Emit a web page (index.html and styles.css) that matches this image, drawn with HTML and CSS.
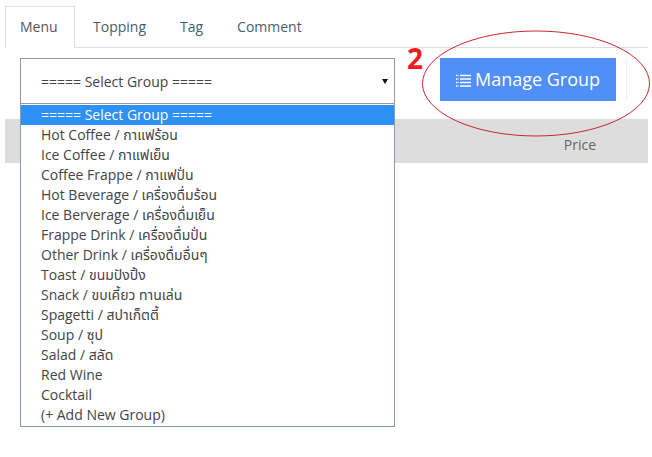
FILE: index.html
```html
<!DOCTYPE html>
<html lang="en">

<head>
    <meta charset="UTF-8" />
    <title>Menu</title>
    <link rel="stylesheet" href="styles.css">
</head>

<body>
    <div class="w">
        <!-- tabs -->
        <ul class="tabs">
            <li class="active">Menu</li>
            <li>Topping</li>
            <li>Tag</li>
            <li>Comment</li>
        </ul>

        <!-- select + button -->
        <div class="controls">
            <div class="select">
                <span>===== Select Group =====</span>
                <i class="arrow"></i>
                <ul class="options">
                    <li class="selected">===== Select Group =====</li>
                    <li>Hot Coffee / กาแฟร้อน</li>
                    <li>Ice Coffee / กาแฟเย็น</li>
                    <li>Coffee Frappe / กาแฟปั่น</li>
                    <li>Hot Beverage / เครื่องดื่มร้อน</li>
                    <li>Ice Berverage / เครื่องดื่มเย็น</li>
                    <li>Frappe Drink / เครื่องดื่มปั่น</li>
                    <li>Other Drink / เครื่องดื่มอื่นๆ</li>
                    <li>Toast / ขนมปังปิ้ง</li>
                    <li>Snack / ขบเคี้ยว ทานเล่น</li>
                    <li>Spagetti / สปาเก็ตตี้</li>
                    <li>Soup / ซุป</li>
                    <li>Salad / สลัด</li>
                    <li>Red Wine</li>
                    <li>Cocktail</li>
                    <li>(+ Add New Group)</li>
                </ul>
            </div>
            <b class="step">2</b>
            <button class="manage">
                <svg width="15" height="14" viewBox="0 0 15 14">
                    <path d="M4 2.5h11M4 6h11M4 9.5h11M4 13h11" stroke="#fff" stroke-width="1.6" />
                    <path d="M0 2.5h2.5M0 6h2.5M0 9.5h2.5M0 13h2.5" stroke="#fff" stroke-width="1.6" stroke-dasharray="1 .5" />
                </svg>
                <span class="manage-text">Manage Group</span>
            </button>
            <div class="divider"></div>
        </div>

        <!-- table head -->
        <div class="thead">
            <span>Price</span>
        </div>

        <!-- red circle round the button -->
        <svg class="circle" width="240" height="120" viewBox="0 0 240 120">
            <ellipse cx="120" cy="60.5" rx="113.5" ry="52.5" fill="none" stroke="#c9252f" stroke-width="1" />
        </svg>
    </div>
</body>

</html>
```

FILE: styles.css
```css
* {
    margin: 0;
    padding: 0;
    box-sizing: border-box;
}

ul {
    list-style: none;
}

body {
    font: 14px/20px "Open Sans", "Noto Sans", "Noto Sans Thai", "DejaVu Sans", sans-serif;
    color: #555;
    background: #fff;
}

.w {
    position: relative;
    width: 652px;
    height: 457px;
    padding: 6px 4px 0 5px;
    overflow: hidden;
}

.tabs {
    display: flex;
    height: 42px;
    border-bottom: 1px solid #ddd;
}

.tabs li {
    padding: 11px 17px 0;
    color: #3f5f6f;
}

.tabs li.active {
    width: 70px;
    height: 42px;
    margin-right: 1px;
    color: #555;
    background: #fff;
    border: 1px solid #ddd;
    border-bottom-color: #fff;
    padding: 10px 0 0 14px;
}

.controls {
    display: flex;
    align-items: flex-start;
    height: 71px;
    padding: 10px 0 0 15px;
}

.select {
    position: relative;
    width: 375px;
    height: 46px;
    padding: 13px 20px;
    border: 1px solid #999;
    color: #444;
}

.arrow {
    position: absolute;
    top: 20px;
    right: 6px;
    border: 3.5px solid transparent;
    border-top: 5px solid #111;
    border-bottom: 0;
}

.options {
    position: absolute;
    z-index: 2;
    top: 45px;
    left: -1px;
    width: 375px;
    height: 323px;
    padding-top: 1px;
    background: #fff;
    border: 1px solid #7f9db9;
    border-top: 0;
}

.options li {
    height: 20px;
    padding-left: 20px;
}

.options .selected {
    background: #2f90f5;
    color: #fff;
}

.step {
    width: 45px;
    padding: 0 0 0 12px;
    margin-top: -17px;
    color: #ee1c25;
    font: bold 28px/34px "Open Sans", sans-serif;
}

.manage {
    display: flex;
    align-items: center;
    gap: 4px;
    width: 176px;
    height: 43px;
    justify-content: center;
    border: none;
    background: #4f8ff7;
    color: #fff;
    font: 18px "Open Sans", sans-serif;
}

.manage-text {
    margin-top: -2px;
}

.divider {
    width: 1px;
    height: 43px;
    margin-left: 10px;
    background: #eee;
}

.thead {
    display: flex;
    justify-content: flex-end;
    align-items: center;
    height: 44px;
    padding: 8px 52px 0 0;
    background: #ddd;
    color: #666;
}

.circle {
    position: absolute;
    top: 23px;
    left: 416px;
}
```
